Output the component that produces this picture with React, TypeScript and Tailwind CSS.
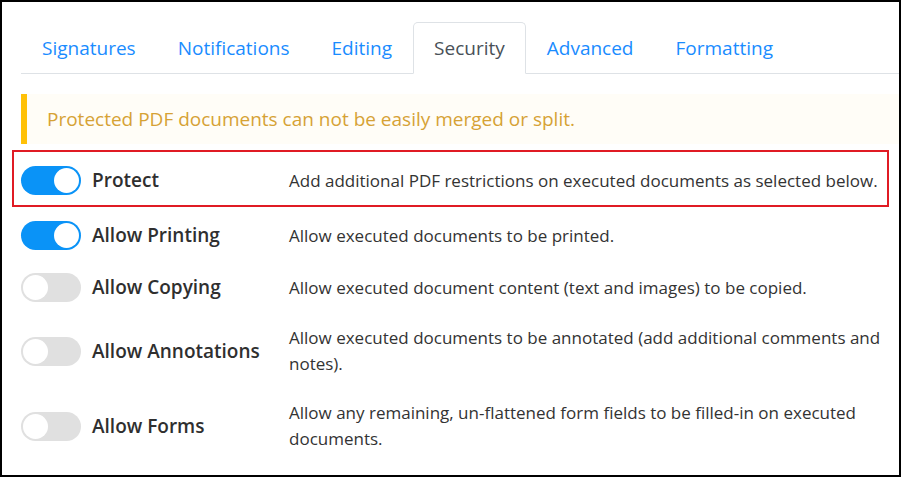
import { useState } from "react"

type Perm = {
  key: string
  label: string
  desc: string
  on: boolean
  boxed?: boolean
}

const tabs = ["Signatures", "Notifications", "Editing", "Security", "Advanced", "Formatting"]

const initial: Perm[] = [
  { key: "protect", label: "Protect", desc: "Add additional PDF restrictions on executed documents as selected below.", on: true, boxed: true },
  { key: "print", label: "Allow Printing", desc: "Allow executed documents to be printed.", on: true },
  { key: "copy", label: "Allow Copying", desc: "Allow executed document content (text and images) to be copied.", on: false },
  { key: "annot", label: "Allow Annotations", desc: "Allow executed documents to be annotated (add additional comments and notes).", on: false },
  { key: "forms", label: "Allow Forms", desc: "Allow any remaining, un-flattened form fields to be filled-in on executed documents.", on: false },
]

function Toggle({ on, onClick }: { on: boolean; onClick: () => void }) {
  return (
    <button
      type="button"
      onClick={onClick}
      className={
        "relative shrink-0 w-[60px] h-[29px] rounded-full " +
        (on ? "bg-[#0a93f7]" : "bg-[#e0e0e0]")
      }
    >
      <span
        className={
          "absolute top-[2px] w-[25px] h-[25px] rounded-full bg-white " +
          (on ? "right-[2px]" : "left-[2px]")
        }
      />
    </button>
  )
}

export default function App() {
  const [active, setActive] = useState("Security")
  const [perms, setPerms] = useState(initial)

  const flip = (key: string) =>
    setPerms(perms.map((p) => (p.key === key ? { ...p, on: !p.on } : p)))

  return (
    <div className="w-[901px] h-[477px] border-2 border-black bg-white pl-[19px] pt-[20px] overflow-hidden font-['Open_Sans',sans-serif]">
      {/* tabs */}
      <div className="flex border-b border-[#dee2e6]">
        {tabs.map((t) => (
          <button
            key={t}
            onClick={() => setActive(t)}
            className={
              "h-[52px] px-[20px] -mb-px border rounded-t-[5px] text-[19px] " +
              (t === active
                ? "border-[#dee2e6] border-b-white bg-white text-[#495057]"
                : "border-transparent text-[#1a8cff]")
            }
          >
            {t}
          </button>
        ))}
      </div>

      {/* warning */}
      <div className="mt-[20px] h-[50px] flex items-center border-l-[6px] border-[#ffc107] bg-[#fffdf7] pl-[20px] text-[19px] text-[#d6a235]">
        Protected PDF documents can not be easily merged or split.
      </div>

      {/* permissions */}
      <div className="mt-[6px] mr-[10px]">
        {perms.map((p) => (
          <div
            key={p.key}
            className={
              "flex items-center " +
              (p.boxed
                ? "h-[57px] -ml-[9px] pl-[7px] pt-[4px] border-2 border-[#e01b24]"
                : "pt-[14px] pb-[9px]")
            }
          >
            <div className="w-[268px] shrink-0 flex items-center gap-[11px]">
              <Toggle on={p.on} onClick={() => flip(p.key)} />
              <span className="text-[19px] font-semibold text-[#2f2f2f]">{p.label}</span>
            </div>
            <p className="flex-1 text-[17px] leading-[26px] text-[#333333]">{p.desc}</p>
          </div>
        ))}
      </div>
    </div>
  )
}
